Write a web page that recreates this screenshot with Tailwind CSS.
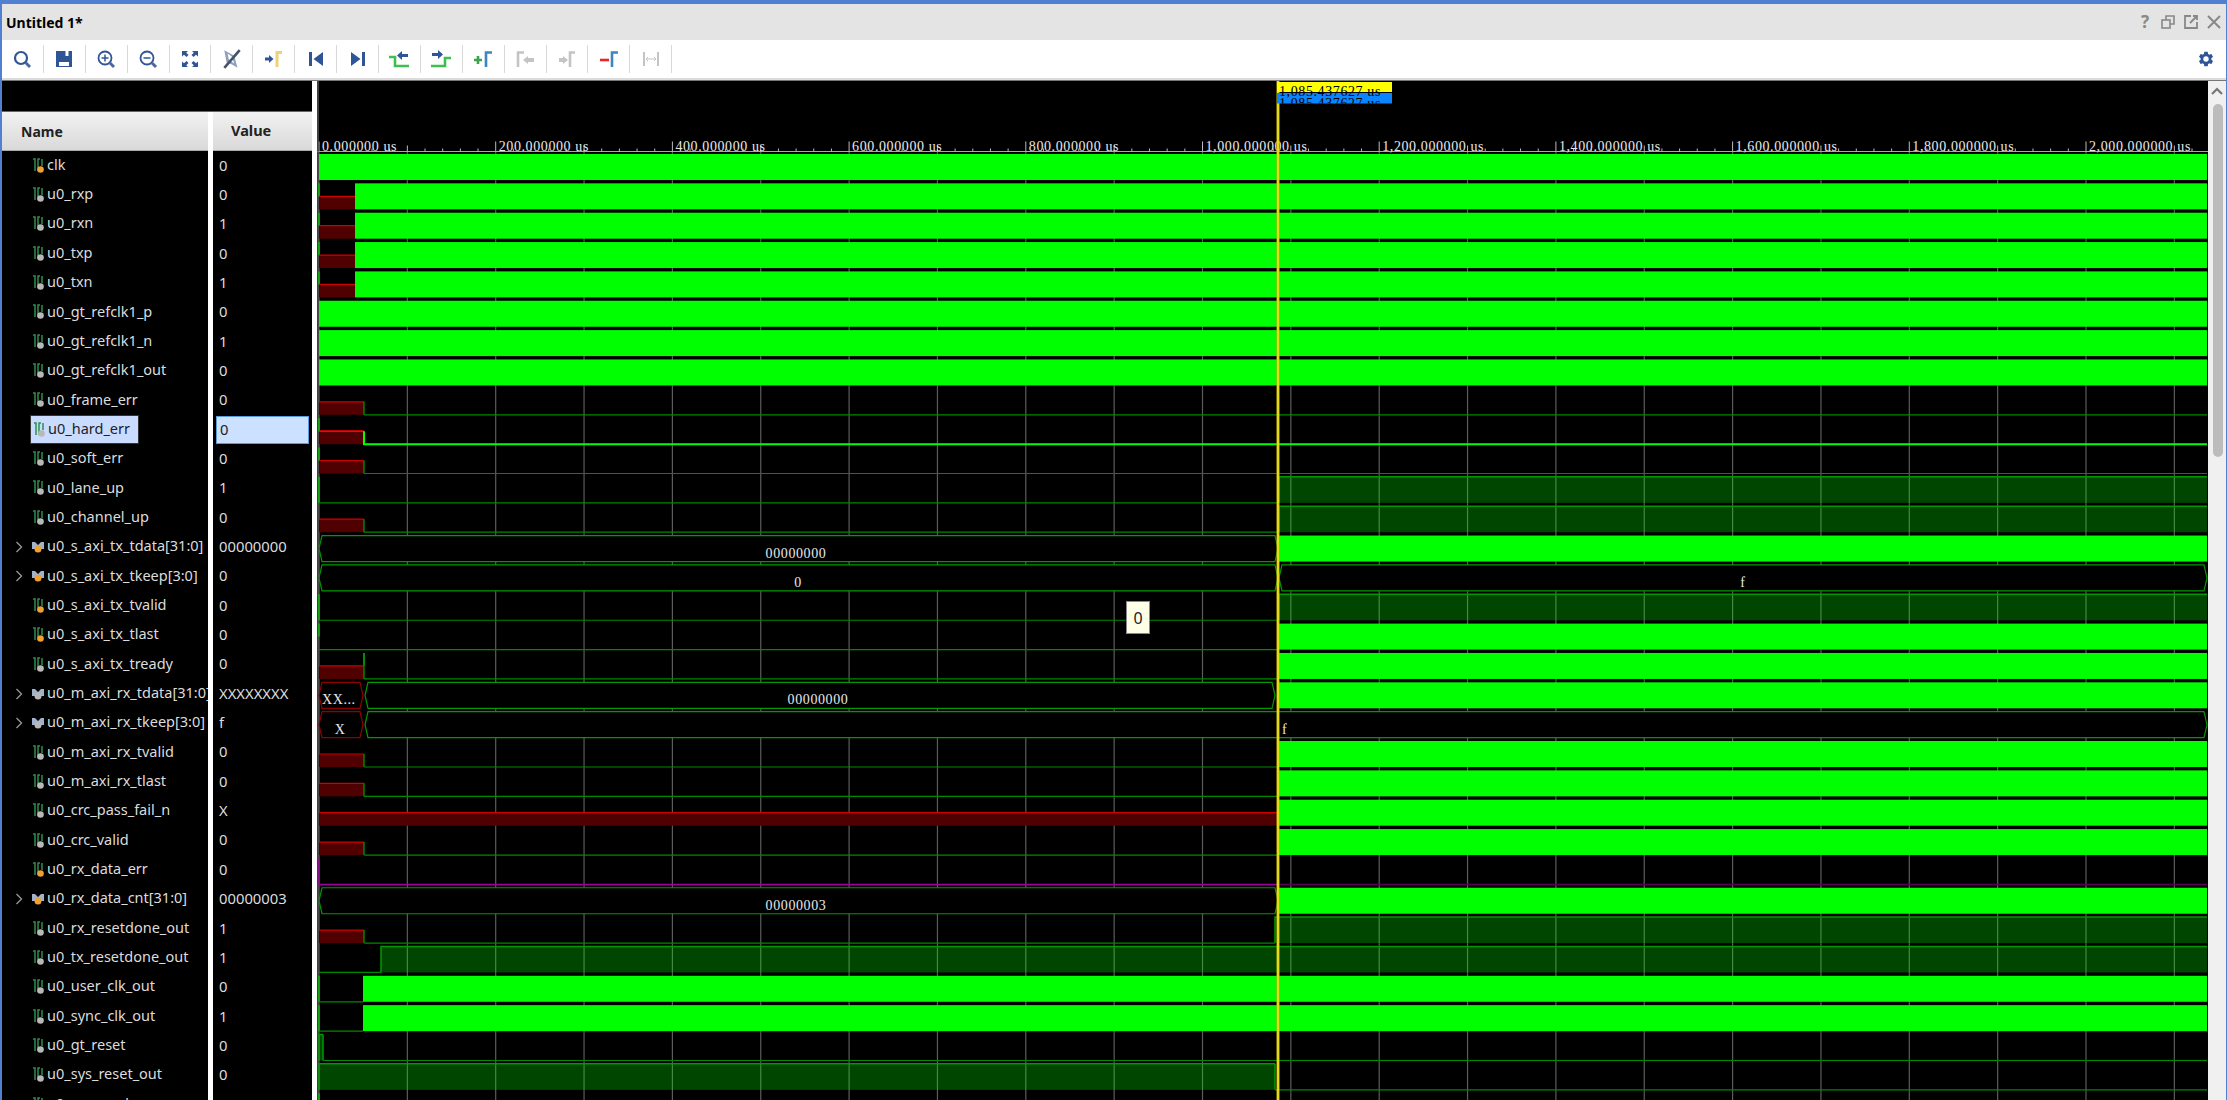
<!DOCTYPE html>
<html lang="en">

<head>
    <meta charset="utf-8" />
    <title>Untitled 1*</title>
    <script src="https://cdn.jsdelivr.net/npm/@tailwindcss/browser@4"></script>
</head>

<body class="bg-white">
    <div class="w-[2227px] h-[1100px] overflow-hidden flex flex-col border-t-4 border-l-2 border-r border-[#4f81d0] font-['Noto_Sans',sans-serif]">
        <!-- title bar -->
        <div class="h-9 shrink-0 bg-[#e4e4e4] flex items-center justify-between pl-1 pr-[3px]">
            <span class="text-[14px] font-bold text-black">Untitled 1*</span>
            <div class="flex items-center gap-[5px]">
                <span class="w-[18px] text-center text-[17px] font-bold text-[#888]">?</span>
                <svg class="w-[18px] h-[18px]" viewBox="0 0 18 18" fill="none" stroke="#888" stroke-width="1.6"><rect x="3" y="7" width="8" height="8" /><path d="M7 7V3h8v8h-4" /></svg>
                <svg class="w-[18px] h-[18px]" viewBox="0 0 18 18" fill="none" stroke="#888" stroke-width="1.8"><path d="M9 3H3v12h12V9" /><path d="M8 10l7-7M11 3h4v4" /></svg>
                <svg class="w-[18px] h-[18px]" viewBox="0 0 18 18" fill="none" stroke="#888" stroke-width="2"><path d="M3 3l12 12M15 3L3 15" /></svg>
            </div>
        </div>

        <!-- toolbar -->
        <div class="h-10 shrink-0 bg-white border-b-2 border-[#dcdcdc] flex items-center justify-between pr-[11px]">
            <div class="flex items-center">
                <div class="w-[41.9px] h-7 flex items-center justify-center border-r border-[#d8d8d8]">
                    <svg class="w-5 h-5" viewBox="0 0 20 20" fill="none" stroke="#2f5597"><circle cx="9" cy="9" r="6" stroke-width="2.2" /><path d="M13.5 13.5L18 18" stroke-width="3" stroke="#4a6a9f" /></svg>
                </div>
                <div class="w-[41.9px] h-7 flex items-center justify-center border-r border-[#d8d8d8]">
                    <svg class="w-5 h-5" viewBox="0 0 20 20"><path fill="#2f5597" fill-rule="evenodd" d="M2 2h16v16H2zM11.5 2v5h3V2zM5 12v5h10v-5z" /><path fill="#2f5597" d="M2 11h16v2H2z" /></svg>
                </div>
                <div class="w-[41.9px] h-7 flex items-center justify-center border-r border-[#d8d8d8]">
                    <svg class="w-5 h-5" viewBox="0 0 20 20" fill="none" stroke="#2f5597"><circle cx="9" cy="9" r="6.5" stroke-width="1.8" /><path d="M9 5.5v7M5.5 9h7" stroke-width="1.5" /><path d="M14 14l4 4" stroke-width="3" stroke="#4a6a9f" /></svg>
                </div>
                <div class="w-[41.9px] h-7 flex items-center justify-center border-r border-[#d8d8d8]">
                    <svg class="w-5 h-5" viewBox="0 0 20 20" fill="none" stroke="#2f5597"><circle cx="9" cy="9" r="6.5" stroke-width="1.8" /><path d="M5.5 9h7" stroke-width="1.5" /><path d="M14 14l4 4" stroke-width="3" stroke="#4a6a9f" /></svg>
                </div>
                <div class="w-[41.9px] h-7 flex items-center justify-center border-r border-[#d8d8d8]">
                    <svg class="w-5 h-5" viewBox="0 0 20 20" fill="#2f5597"><path d="M2 2h6L6.2 3.8 8.5 6 6.5 8 4 5.8 2 7.5zM18 2v5.5L16 5.8 13.5 8l-2-2 2.3-2.2L12 2zM2 18v-5.5L4 14.2 6.5 12l2 2-2.3 2.2L8 18zM18 18h-6l1.8-1.8-2.3-2.2 2-2 2.5 2.2 2-1.7z" /></svg>
                </div>
                <div class="w-[41.9px] h-7 flex items-center justify-center border-r border-[#d8d8d8]">
                    <svg class="w-[22px] h-[22px]" viewBox="0 0 20 20"><path fill="#8fa0bd" d="M3 2l9 5 3 11-5-3-5-2z" /><path fill="#fff" d="M6 5l4 3 2 6-3-2-2-2z" /><path stroke="#46536b" stroke-width="2.400" d="M3 18L17 2" /></svg>
                </div>
                <div class="w-[41.9px] h-7 flex items-center justify-center border-r border-[#d8d8d8]">
                    <svg class="w-5 h-5" viewBox="0 0 20 20"><path fill="#2f5597" d="M1 8.5h4V6l4.5 4L5 14v-2.500H1z" /><path fill="none" stroke="#ecd27a" stroke-width="3" d="M18 3.500h-5V18" /></svg>
                </div>
                <div class="w-[41.9px] h-7 flex items-center justify-center border-r border-[#d8d8d8]">
                    <svg class="w-5 h-5" viewBox="0 0 20 20" fill="#2f5597"><path d="M3 3h3v14H3zM17 3v14L7.500 10z" /></svg>
                </div>
                <div class="w-[41.9px] h-7 flex items-center justify-center border-r border-[#d8d8d8]">
                    <svg class="w-5 h-5" viewBox="0 0 20 20" fill="#2f5597"><path d="M14 3h3v14h-3zM3 3v14l9.500-7z" /></svg>
                </div>
                <div class="w-[41.9px] h-7 flex items-center justify-center border-r border-[#d8d8d8]">
                    <svg class="w-[22px] h-5" viewBox="0 0 22 20"><path fill="none" stroke="#3fbf4f" stroke-width="2.600" d="M1 8h6v9h14" /><path fill="#2f5597" d="M20 5h-6V2L9 6.500l5 4.500V8h6z" /></svg>
                </div>
                <div class="w-[41.9px] h-7 flex items-center justify-center border-r border-[#d8d8d8]">
                    <svg class="w-[22px] h-5" viewBox="0 0 22 20"><path fill="none" stroke="#3fbf4f" stroke-width="2.600" d="M21 9h-6v8H1" /><path fill="#2f5597" d="M2 4h6V1l5 4.500L8 10V7H2z" /></svg>
                </div>
                <div class="w-[41.9px] h-7 flex items-center justify-center border-r border-[#d8d8d8]">
                    <svg class="w-5 h-5" viewBox="0 0 20 20"><path stroke="#3fa34d" stroke-width="2.600" d="M1 11h8M5 7v8" /><path fill="none" stroke="#3a86c4" stroke-width="2.600" d="M19 3.500h-6V18" /></svg>
                </div>
                <div class="w-[41.9px] h-7 flex items-center justify-center border-r border-[#d8d8d8]">
                    <svg class="w-5 h-5" viewBox="0 0 20 20"><path fill="none" stroke="#c4c4c4" stroke-width="2.600" d="M9 3.500H3V18" /><path fill="#c4c4c4" d="M19 9h-6V7l-5 4 5 4v-2h6z" /></svg>
                </div>
                <div class="w-[41.9px] h-7 flex items-center justify-center border-r border-[#d8d8d8]">
                    <svg class="w-5 h-5" viewBox="0 0 20 20"><path fill="none" stroke="#c4c4c4" stroke-width="2.600" d="M18 3.500h-5V18" /><path fill="#c4c4c4" d="M2 9h4V7l5 4-5 4v-2H2z" /></svg>
                </div>
                <div class="w-[41.9px] h-7 flex items-center justify-center border-r border-[#d8d8d8]">
                    <svg class="w-5 h-5" viewBox="0 0 20 20"><path stroke="#e8262c" stroke-width="2.600" d="M1 11h9" /><path fill="none" stroke="#3a86c4" stroke-width="2.600" d="M19 3.500h-6V18" /></svg>
                </div>
                <div class="w-[41.9px] h-7 flex items-center justify-center border-r border-[#d8d8d8]">
                    <svg class="w-5 h-5" viewBox="0 0 20 20" fill="none" stroke="#c4c4c4"><path stroke-width="2" d="M3 3v14M17 3v14" /><path stroke-width="1" d="M5 10h10M7 8l-2 2 2 2M13 8l2 2-2 2" /></svg>
                </div>
            </div>
            <svg class="w-[18px] h-[18px]" viewBox="0 0 24 24" fill="#2f5597"><path d="M19.14 12.94c.04-.3.06-.61.06-.94 0-.32-.02-.64-.07-.94l2.030-1.580a.49.49 0 0 0 .12-.61l-1.920-3.320a.49.49 0 0 0-.59-.22l-2.390.96a7 7 0 0 0-1.620-.94l-.36-2.540a.48.48 0 0 0-.48-.41h-3.840c-.24 0-.43.17-.47.41l-.36 2.540c-.59.24-1.130.57-1.620.94l-2.390-.96a.49.49 0 0 0-.59.22L2.740 8.870c-.12.21-.08.47.12.61l2.030 1.580c-.05.3-.09.63-.09.94s.02.64.07.94l-2.030 1.580a.49.49 0 0 0-.12.61l1.920 3.320c.12.22.37.29.59.22l2.390-.96c.5.38 1.030.7 1.620.94l.36 2.54c.05.24.24.41.48.41h3.840c.24 0 .44-.17.47-.41l.36-2.540c.59-.24 1.130-.56 1.620-.94l2.390.96c.22.08.47 0 .59-.22l1.920-3.320c.12-.22.07-.47-.12-.61l-2.010-1.580zM12 15.600A3.600 3.600 0 1 1 12 8.400a3.600 3.600 0 0 1 0 7.200z" /></svg>
        </div>

        <!-- names, values, waves -->
        <div class="flex flex-1 min-h-0 border-t border-[#777]">
            <div class="w-[310px] shrink-0 flex flex-col bg-black">
                <div class="h-[31px] shrink-0 border-b border-[#666]"></div>
                <div class="flex flex-1 min-h-0">
                    <div class="w-[206px] shrink-0 border-r-[5px] border-white box-content overflow-hidden">
                        <div class="h-[39px] flex items-center pl-[19px] text-[14px] font-bold text-[#222] bg-gradient-to-b from-[#f2f2f2] to-[#d9d9d9] border-b border-[#aaa]">Name</div>
                        <div id="names"></div>
                    </div>
                    <div class="flex-1 min-w-0 overflow-hidden">
                        <div class="h-[39px] flex items-center pl-[18px] text-[14.5px] font-bold text-[#222] bg-gradient-to-b from-[#f2f2f2] to-[#d9d9d9] border-b border-[#aaa]">Value</div>
                        <div id="values"></div>
                    </div>
                </div>
            </div>
            <div class="w-[5px] shrink-0 bg-white"></div>
            <div class="relative w-[1891px] shrink-0 bg-black overflow-hidden">
                <svg id="wave" class="block font-['Liberation_Serif',serif] text-[14px]" width="1891" height="1020" viewBox="317 80 1891 1020"></svg>
                <!-- hover tooltip -->
                <div class="absolute left-[809px] top-[520px] w-6 h-[33px] flex items-center justify-center bg-[#ffffe8] border border-[#888] text-[16px] text-[#222]">0</div>
            </div>
            <div class="flex-1 bg-[#f0f0f0] flex flex-col items-center pt-[5px]">
                <svg class="w-[14px] h-[10px]" viewBox="0 0 14 10" fill="none" stroke="#777" stroke-width="2.200"><path d="M2 8l5-5 5 5" /></svg>
                <div class="w-[10px] h-[353px] mt-2 ml-[2px] rounded-full bg-[#bcbcbc]"></div>
            </div>
        </div>
    </div>

    <script>
        const signals = [
            ["clk", "0", "o"], ["u0_rxp", "0"], ["u0_rxn", "1"], ["u0_txp", "0"], ["u0_txn", "1"],
            ["u0_gt_refclk1_p", "0"], ["u0_gt_refclk1_n", "1"], ["u0_gt_refclk1_out", "0"],
            ["u0_frame_err", "0"], ["u0_hard_err", "0"], ["u0_soft_err", "0"], ["u0_lane_up", "1"], ["u0_channel_up", "0"],
            ["u0_s_axi_tx_tdata[31:0]", "00000000", "o", 1], ["u0_s_axi_tx_tkeep[3:0]", "0", "o", 1],
            ["u0_s_axi_tx_tvalid", "0", "o"], ["u0_s_axi_tx_tlast", "0", "o"], ["u0_s_axi_tx_tready", "0"],
            ["u0_m_axi_rx_tdata[31:0]", "XXXXXXXX", "g", 1], ["u0_m_axi_rx_tkeep[3:0]", "f", "g", 1],
            ["u0_m_axi_rx_tvalid", "0"], ["u0_m_axi_rx_tlast", "0"], ["u0_crc_pass_fail_n", "X"], ["u0_crc_valid", "0"],
            ["u0_rx_data_err", "0", "o"], ["u0_rx_data_cnt[31:0]", "00000003", "o", 1],
            ["u0_rx_resetdone_out", "1"], ["u0_tx_resetdone_out", "1"], ["u0_user_clk_out", "0"], ["u0_sync_clk_out", "1"],
            ["u0_gt_reset", "0"], ["u0_sys_reset_out", "0"], ["u0_power_down", "0"]
        ];
        const SELECTED = 9;

        function signalIcon(dot, bus) {
            const c = dot === "o" ? "#f0a030" : "#b8b8b8";
            if (bus) {
                return `<svg class="w-[14px] h-[16px] shrink-0" viewBox="0 0 14 16"><path fill="#9fb4cc" d="M1 3h3l3 3 3-3h3v7H1z"/><circle cx="7" cy="10" r="3.500" fill="${c}"/></svg>`;
            }
            return `<svg class="w-[14px] h-[18px] shrink-0" viewBox="0 0 14 18" fill="none"><path stroke="#2f8f4f" stroke-width="1.500" d="M2 2h2v12M7 14V2h2M11 2v7"/><circle cx="9.500" cy="12.500" r="3.300" fill="${c}"/></svg>`;
        }

        document.getElementById("names").innerHTML = signals.map((s, i) => `
            <div class="h-[29.35px] flex items-center relative text-[14.5px] whitespace-nowrap text-[#dcdcdc]">
                ${s[3] ? `<svg class="absolute left-[13px] w-2 h-3" viewBox="0 0 8 12" fill="none" stroke="#999" stroke-width="1.300"><path d="M1.500 1l5 5-5 5"/></svg>` : ""}
                <div class="ml-[28px] pl-[1px] pr-2 h-[29px] flex items-center gap-[2px] ${i === SELECTED ? "bg-[#c9dcff] text-[#222] border border-[#333]" : ""}">
                    ${signalIcon(s[2], s[3])}<span class="-mt-[2px]">${s[0]}</span>
                </div>
            </div>`).join("");

        document.getElementById("values").innerHTML = signals.map((s, i) => `
            <div class="h-[29.35px] flex items-center text-[14.8px] text-[#dcdcdc] px-[3px]">
                <div class="w-[93px] h-[28px] flex items-center pl-[3px] pb-[2px] ${i === SELECTED ? "bg-[#cce0ff] text-[#222] border border-[#5a9be0]" : ""}">${s[1]}</div>
            </div>`).join("");

        // waveform drawing, coordinates are page pixels
        const L = 319, R = 2207, CUR = 1278;
        const rowTop = i => 153 + 29.35 * i;
        let out = "";

        const rect = (x0, x1, y0, y1, fill) => { out += `<rect x="${x0}" y="${y0}" width="${x1 - x0}" height="${y1 - y0}" fill="${fill}"/>`; };
        const line = (d, stroke, w = 1.2) => { out += `<path d="${d}" fill="none" stroke="${stroke}" stroke-width="${w}"/>`; };

        const bright = (t, x0, x1 = R) => rect(x0, x1, t, t + 26, "#00ff00");
        const dark = (t, x0, x1 = R) => {
            rect(x0, x1, t, t + 26, "rgba(0,255,0,0.27)");
            line(`M${x0} ${t + 26}V${t}H${x1}`, "#009a00", 1.5);
        };
        const low = (t, x0, x1 = R) => line(`M${x0} ${t + 26}H${x1}`, "#008a00");
        const red = (t, x0, x1) => {
            rect(x0, x1, t + 13, t + 26, "#500000");
            line(`M${x0} ${t + 13}H${x1}`, "#d00000");
        };
        const edge = (t, x, y1 = t + 13) => line(`M${x} ${t}V${y1}`, "#00c000", 1.5);
        const hex = (t, x0, x1, color) => {
            const m = t + 13;
            out += `<path d="M${x0} ${m}L${x0 + 3} ${t}H${x1 - 3}L${x1} ${m}L${x1 - 3} ${t + 26}H${x0 + 3}Z" fill="#000" stroke="${color}" stroke-width="1.200"/>`;
        };
        const label = (x, y, s, anchor = "start", fill = "#e8e8e8") => {
            out += `<text x="${x}" y="${y}" fill="${fill}" text-anchor="${anchor}" letter-spacing="0.6">${s}</text>`;
        };
        const HEX_G = "#009a00", HEX_R = "#900000";
        const redThenLow = (t, x1 = R) => { red(t, L, 364); line(`M364 ${t + 13}V${t + 26}`, "#00a000"); low(t, 364, x1); };

        // ruler
        line(`M317 150.500H${R + 1}`, "#aaa", 1);
        for (let k = 0; k <= 106; k++) {
            const x = L + 17.67 * k;
            if (x > R) break;
            const h = k % 10 === 0 ? 10 : k % 5 === 0 ? 6 : 3;
            line(`M${x} ${150.5 - h}V150.500`, "#bbb", 1);
        }
        for (let k = 0; k <= 10; k++) {
            const us = k === 0 ? "0.000000 us" : (k * 200).toLocaleString("en-US") + ".000000 us";
            label(L + 176.7 * k + 3, 150, us);
        }

        // grid
        for (let k = 0; k <= 21; k++) {
            const x = L + 88.35 * k;
            line(`M${x} 151V1100`, "#5c5c5c", 1.2);
        }
        line("M318 80V1100", "#555", 1.5);

        const draw = {
            0: t => bright(t, L),
            1: t => { edge(t, L); red(t, L, 355); bright(t, 355); },
            5: t => bright(t, L),
            8: t => redThenLow(t),
            9: t => {
                edge(t, L);
                rect(L, 364, t + 13, t + 26, "#500000");
                line(`M${L} ${t + 13}H364`, "#ff0000", 1.8);
                line(`M364 ${t + 13}V${t + 26}H${R}`, "#00ff00", 2);
            },
            10: t => { edge(t, L); redThenLow(t); },
            11: t => { edge(t, L, t + 26); low(t, L, CUR); dark(t, CUR + 1); },
            12: t => { redThenLow(t, CUR); dark(t, CUR + 1); },
            13: t => { hex(t, L, CUR, HEX_G); bright(t, CUR + 1); label(796, t + 22, "00000000", "middle"); },
            14: t => { hex(t, L, CUR, HEX_G); hex(t, CUR + 1, R, HEX_G); label(798, t + 22, "0", "middle"); label(1743, t + 22, "f", "middle"); },
            15: t => { edge(t, L, t + 26); low(t, L, CUR); dark(t, CUR + 1); },
            16: t => { edge(t, L); low(t, L, CUR); bright(t, CUR + 1); },
            17: t => { edge(t, 364); redThenLow(t, CUR); bright(t, CUR + 1); },
            18: t => { hex(t, L, 363, HEX_R); hex(t, 365, 1275, HEX_G); bright(t, CUR); label(322, t + 22, "XX..."); label(818, t + 22, "00000000", "middle"); },
            19: t => { hex(t, L, 363, HEX_R); hex(t, 365, R, HEX_G); label(340, t + 22, "X", "middle"); label(1282, t + 22, "f"); },
            20: t => { redThenLow(t, CUR); bright(t, CUR + 1); },
            22: t => { red(t, L, CUR); bright(t, CUR + 1); },
            23: t => { redThenLow(t, CUR); bright(t, CUR + 1); },
            24: t => { line(`M${L} ${t}V${t + 26}H${CUR}`, "#a000a0", 1.5); line(`M${CUR} ${t + 26}H${R}`, "#5a005a", 1.5); },
            25: t => { hex(t, L, CUR, HEX_G); bright(t, CUR + 1); label(796, t + 22, "00000003", "middle"); },
            26: t => { redThenLow(t, 1275); dark(t, 1275); },
            27: t => { low(t, L, 381); dark(t, 381); },
            28: t => { edge(t, L, t + 26); low(t, L, 363); bright(t, 363); },
            30: t => { dark(t, L, 323); line(`M323 ${t}V${t + 26}`, "#009a00", 1.5); low(t, 323); },
            31: t => { dark(t, L, 1275); line(`M1275 ${t}V${t + 26}`, "#009a00", 1.5); low(t, 1275); },
            32: t => edge(t, L)
        };
        [2, 3, 4].forEach(i => draw[i] = draw[1]);
        [6, 7].forEach(i => draw[i] = draw[5]);
        draw[21] = draw[20];
        draw[29] = draw[28];

        signals.forEach((s, i) => draw[i](rowTop(i)));

        // cursor and its time labels
        rect(1276.500, 1279.500, 80, 1100, "#c8b400");
        rect(1277.500, 1278.500, 80, 1100, "#ffff30");
        rect(1277, 1392, 81, 91, "#ffff00");
        rect(1277, 1392, 92, 102.500, "#0a84ff");
        out += `<clipPath id="cursorClip"><rect x="1277" y="81" width="115" height="21.500"/></clipPath>`;
        out += `<g clip-path="url(#cursorClip)"><text x="1279" y="95" fill="#000" letter-spacing="0.6">1,085.437627 us</text><text x="1279" y="107" fill="#000" letter-spacing="0.6">1,085.437627 us</text></g>`;

        document.getElementById("wave").innerHTML = out;
    </script>
</body>

</html>
